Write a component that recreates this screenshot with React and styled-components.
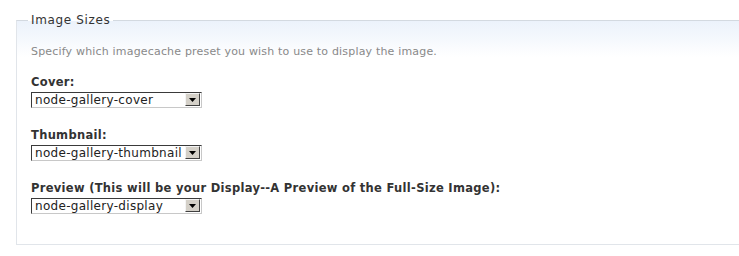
import React from 'react'
import styled, { createGlobalStyle } from 'styled-components'

const Global = createGlobalStyle`
  html, body {
    margin: 0;
    padding: 0;
    background: #fff;
    overflow: hidden;
  }
  body {
    font-family: Verdana, "DejaVu Sans", sans-serif;
    color: #333;
  }
`

const Page = styled.div`
  width: 739px;
  height: 256px;
  padding-top: 12px;
  box-sizing: border-box;
  overflow: hidden;
`

const Fieldset = styled.fieldset`
  margin: 0 0 0 16px;
  width: 800px;
  height: 233px;
  box-sizing: border-box;
  border: 1px solid #e1e5ea;
  border-top-color: #d3d9e0;
  padding: 17px 14px 0 14px;
  background: linear-gradient(to bottom, #ecf2fb 0px, #f6f9fd 20px, #ffffff 36px);
`

const Legend = styled.legend`
  font-size: 12px;
  line-height: 16px;
  letter-spacing: 0.65px;
  color: #333;
  padding: 0 3px;
  margin-left: -3px;
`

const Note = styled.p`
  margin: 0 0 16px 0;
  font-size: 11px;
  line-height: 14px;
  letter-spacing: 0.18px;
  color: #898989;
`

const Item = styled.div`
  margin-bottom: 20px;
`

const Label = styled.div`
  font-size: 11.5px;
  font-weight: bold;
  line-height: 14px;
  letter-spacing: 0.3px;
  color: #333;
  margin-bottom: 3px;
`

const SelectBox = styled.div`
  display: flex;
  width: 171px;
  height: 16px;
  box-sizing: border-box;
  border-top: 1px solid #3a3a3a;
  border-left: 1px solid #3a3a3a;
  border-right: 1px solid #c8c8c8;
  border-bottom: 1px solid #c8c8c8;
  background: #fff;
`

const SelectText = styled.span`
  flex: 1;
  font-size: 12px;
  line-height: 14px;
  letter-spacing: 0.3px;
  padding-left: 3px;
  color: #222;
  white-space: nowrap;
  overflow: hidden;
`

const Arrow = styled.span`
  width: 15px;
  height: 13px;
  margin: 0 1px 0 0;
  box-sizing: border-box;
  background: #d4d0c8;
  border-top: 1px solid #f4f4f4;
  border-left: 1px solid #f4f4f4;
  border-right: 1px solid #404040;
  border-bottom: 1px solid #404040;
  display: flex;
  align-items: center;
  justify-content: center;
`

const Select = ({ value }) => (
  <SelectBox>
    <SelectText>{value}</SelectText>
    <Arrow>
      <svg width="7" height="4" viewBox="0 0 7 4">
        <path d="M0 0h7L3.5 4z" fill="#000" />
      </svg>
    </Arrow>
  </SelectBox>
)

export default function App() {
  return (
    <Page>
      <Global />
      <Fieldset>
        <Legend>Image Sizes</Legend>
        <Note>Specify which imagecache preset you wish to use to display the image.</Note>
        <Item>
          <Label>Cover:</Label>
          <Select value="node-gallery-cover" />
        </Item>
        <Item>
          <Label>Thumbnail:</Label>
          <Select value="node-gallery-thumbnail" />
        </Item>
        <Item>
          <Label>Preview (This will be your Display--A Preview of the Full-Size Image):</Label>
          <Select value="node-gallery-display" />
        </Item>
      </Fieldset>
    </Page>
  )
}
